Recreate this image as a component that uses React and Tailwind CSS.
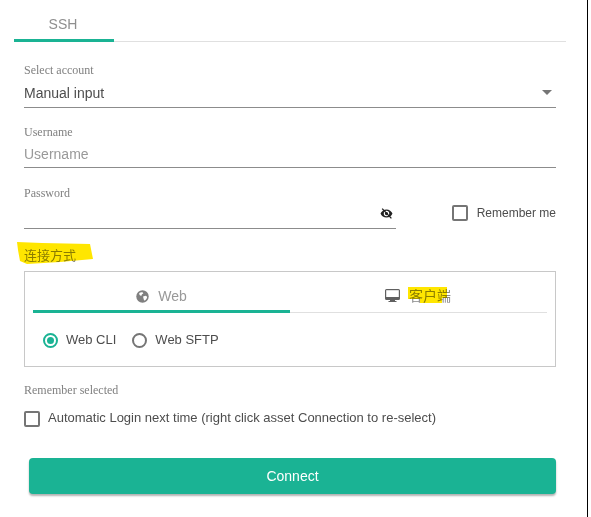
import React from "react";

const serif = "font-['Liberation_Serif','Noto_Sans_CJK_SC',serif]";

function CheckBox() {
  return <span className="block w-4 h-4 shrink-0 rounded-[2px] border-2 border-[#757575] bg-white" />;
}

function Radio({ checked }) {
  return (
    <span
      className={`flex items-center justify-center w-[15px] h-[15px] shrink-0 rounded-full border-2 ${
        checked ? "border-[#1ab394]" : "border-[#757575]"
      }`}
    >
      {checked && <span className="block w-[7px] h-[7px] rounded-full bg-[#1ab394]" />}
    </span>
  );
}

function EyeOff() {
  return (
    <svg width="13" height="13" viewBox="0 0 24 24">
      <path
        fill="#222"
        d="M12 4.500C7 4.500 2.700 7.600 1 12c1.700 4.400 6 7.500 11 7.500s9.300-3.100 11-7.500c-1.700-4.400-6-7.500-11-7.500zm0 12.500a5 5 0 1 1 0-10 5 5 0 0 1 0 10zm0-8a3 3 0 1 0 0 6 3 3 0 0 0 0-6z"
      />
      <path d="M4 3l17 18" stroke="#222" strokeWidth="2.500" />
    </svg>
  );
}

function Globe() {
  return (
    <svg width="13" height="13" viewBox="0 0 24 24">
      <circle cx="12" cy="12" r="11.500" fill="#808080" />
      <path
        fill="#fff"
        d="M6 5.500c2-1.500 5-2 6.500-1l1 2-2.500 1.500-1 2.500-2.500-.5-1.500-2zM13 12l5-1.500 2.500 2c0 3-1.500 5-3.500 6.500l-2 .5-1-3.500z"
      />
    </svg>
  );
}

function Monitor() {
  return (
    <svg width="15" height="13" viewBox="0 0 15 13">
      <path fill="#606060" d="M1.500 0h12A1.500 1.500 0 0 1 15 1.500v8a1.500 1.500 0 0 1-1.500 1.500H10v1h1.500v1h-8v-1H5v-1H1.500A1.500 1.500 0 0 1 0 9.500v-8A1.500 1.500 0 0 1 1.500 0z" />
      <path fill="#fff" d="M1.200 1.200h12.600v6.800H1.200z" />
    </svg>
  );
}

function Marker({ className, viewBox, d }) {
  return (
    <svg className={`absolute mix-blend-multiply pointer-events-none ${className}`} viewBox={viewBox}>
      <path fill="#ffe600" d={d} />
    </svg>
  );
}

export default function App() {
  return (
    <div className="w-[588px] h-[517px] border-r border-black bg-white font-['Liberation_Sans',Arial,sans-serif] text-[#4d4d4d]">
      <div className="pt-[8px] pl-[14px] pr-[21px]">
        <div className="border-b border-[#e0e0e0] h-[34px]">
          <div className="w-[100px] h-[34px] border-b-[3px] border-[#1ab394] flex items-center justify-center pt-[1px] pr-[2px] text-[14px] text-[#8f8f8f]">
            SSH
          </div>
        </div>
      </div>

      <div className="pl-[24px] pr-[31px] pt-[21px]">
        <div className={`${serif} text-[12px] leading-[14px] text-[#808080]`}>Select account</div>
        <div className="flex items-center justify-between h-[30px] border-b border-[#8c8c8c] box-content">
          <span className="mt-[2px] text-[14px] text-[#4d4d4d]">Manual input</span>
          <span className="mr-[4px] w-0 h-0 border-x-[5px] border-x-transparent border-t-[5px] border-t-[#757575]" />
        </div>

        <div className={`${serif} mt-[17px] text-[12px] leading-[14px] text-[#808080]`}>Username</div>
        <div className="flex items-center h-[28px] border-b border-[#8c8c8c] box-content">
          <span className="mt-[2px] text-[14px] text-[#999999]">Username</span>
        </div>

        <div className="flex mt-[18px]">
          <div className="w-[372px]">
            <div className={`${serif} text-[12px] leading-[14px] text-[#808080]`}>Password</div>
            <div className="flex items-end justify-end pr-[3px] pb-[8px] h-[29px] border-b border-[#8c8c8c]">
              <EyeOff />
            </div>
          </div>
          <label className="flex items-center gap-[9px] ml-[56px] mt-[19px] h-[16px] text-[12px] text-[#4d4d4d] whitespace-nowrap">
            <CheckBox />
            <span className="mb-[1px]">Remember me</span>
          </label>
        </div>

        <div className="relative mt-[17px] h-[17px] text-[13px] leading-[17px] text-[#8a8a8a] font-['Noto_Sans_CJK_SC',sans-serif]">
          连接方式
          <Marker
            className="left-[-7px] top-[-4px] w-[76px] h-[22px]"
            viewBox="0 0 76 22"
            d="M0 0l25 1 48 1 3 15-33 3-33 2-7-3-2-11z"
          />
        </div>

        <div className="mt-[8px] h-[96px] border border-[#c8c8c8] px-[8px] box-border">
          <div className="flex h-[41px] border-b border-[#e0e0e0]">
            <div className="w-[257px] h-[41px] border-b-[3px] border-[#1ab394] pt-[10px] flex items-center justify-center gap-[9px] text-[14px] text-[#999999]">
              <Globe />
              Web
            </div>
            <div className="flex-1 flex items-center justify-start pl-[95px] pt-[10px] pb-[3px] gap-[9px] text-[14px] text-[#8a8a8a] font-['Liberation_Sans','Noto_Sans_CJK_SC',sans-serif]">
              <Monitor />
              <span className="relative mt-[1px]">
                客户端
                <Marker
                  className="left-[-1px] top-[1px] w-[39px] h-[16px]"
                  viewBox="0 0 39 16"
                  d="M0 0H39V11H34V16H12V12H0z"
                />
              </span>
            </div>
          </div>
          <div className="flex items-center h-[54px] pl-[10px] text-[13px] text-[#4d4d4d]">
            <Radio checked />
            <span className="ml-[8px]">Web CLI</span>
            <span className="ml-[16px]">
              <Radio />
            </span>
            <span className="ml-[8px]">Web SFTP</span>
          </div>
        </div>

        <div className={`${serif} mt-[16px] text-[12px] leading-[14px] text-[#808080]`}>Remember selected</div>
        <label className="flex items-center gap-[8px] mt-[13px] h-[17px] text-[13px] text-[#4d4d4d] whitespace-nowrap">
          <CheckBox />
          <span className="mb-[2px]">Automatic Login next time (right click asset Connection to re-select)</span>
        </label>

        <button className="block w-[527px] h-[36px] ml-[5px] mt-[31px] rounded-[4px] bg-[#1ab394] text-white text-[14px] shadow-[0_2px_2px_rgba(0,0,0,0.3)]">
          Connect
        </button>
      </div>
    </div>
  );
}
